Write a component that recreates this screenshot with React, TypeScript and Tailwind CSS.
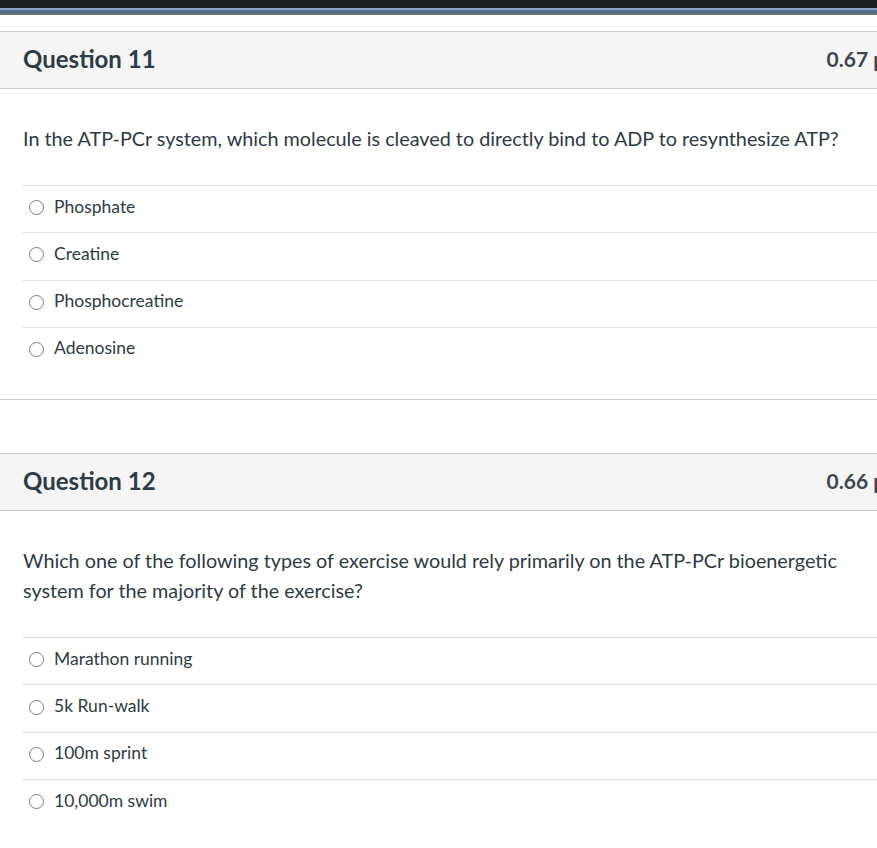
import * as React from "react";

type Question = {
  id: number;
  points: string;
  text: string;
  answers: string[];
};

const QUESTIONS: Question[] = [
  {
    id: 11,
    points: "0.67 pts",
    text: "In the ATP-PCr system, which molecule is cleaved to directly bind to ADP to resynthesize ATP?",
    answers: ["Phosphate", "Creatine", "Phosphocreatine", "Adenosine"],
  },
  {
    id: 12,
    points: "0.66 pts",
    text: "Which one of the following types of exercise would rely primarily on the ATP-PCr bioenergetic system for the majority of the exercise?",
    answers: ["Marathon running", "5k Run-walk", "100m sprint", "10,000m swim"],
  },
];

export default function App() {
  return (
    <div
      className="min-h-[848px] w-full overflow-hidden bg-white text-[#2d3b45]"
      style={{ fontFamily: "Lato, 'Open Sans', sans-serif" }}
    >
      {/* Top nav remnant */}
      <div className="h-[8px] bg-[#1d1e22]" />
      <div className="h-[2px] bg-[#8ba3c7]" />
      <div className="h-[3px] bg-[#566c8a]" />
      <div className="h-[2px] bg-[#6b7075]" />

      <div className="flex w-[925px] flex-col gap-[53px] pt-[16px]">
        {QUESTIONS.map((q) => (
          <QuestionBox key={q.id} q={q} />
        ))}
      </div>
    </div>
  );
}

function QuestionBox({ q }: { q: Question }) {
  return (
    <div className="border-b border-[#c7cdd1]">
      <div className="flex h-[58px] items-center justify-between border-y border-[#c7cdd1] bg-[#f5f5f5] px-[23px] pb-[3px]">
        <h2 className="text-[24px] font-bold leading-none">Question {q.id}</h2>
        <span className="text-[21px] font-bold leading-none text-[#3d4750]">{q.points}</span>
      </div>
      <div className="pb-[25px] pl-[23px] pt-[34px]">
        <p className="max-w-[840px] text-[19.8px] leading-[30px]">{q.text}</p>
        <div className="mt-[32px]">
          {q.answers.map((a) => (
            <label
              key={a}
              className="flex h-[47.3px] items-center gap-[10px] border-t border-[#dde0e3] pb-[5px] pl-[6px] text-[17.5px]"
            >
              <span className="mt-[2px] size-[15px] shrink-0 rounded-full border border-[#7a7a7a] bg-white" />
              <span>{a}</span>
            </label>
          ))}
        </div>
      </div>
    </div>
  );
}
